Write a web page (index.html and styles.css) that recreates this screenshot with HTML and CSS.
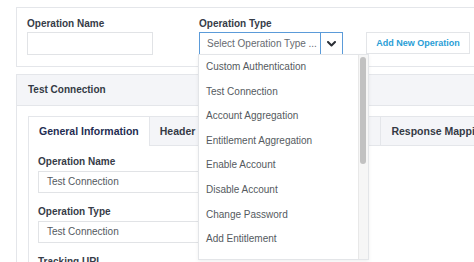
FILE: index.html
```html
<!DOCTYPE html>
<html>
<head>
<meta charset="utf-8">
<link rel="stylesheet" href="styles.css">
</head>
<body>
<div class="page">
  <section class="ops-bar">
    <div class="field f-name">
      <label class="lbl">Operation Name</label>
      <div class="input"></div>
    </div>
    <div class="field f-type">
      <label class="lbl">Operation Type</label>
      <div class="select">
        <span class="select-text">Select Operation Type ...</span>
        <span class="select-btn">
          <svg width="9" height="6" viewBox="0 0 9 6"><path d="M1 1 L4.5 4.5 L8 1" fill="none" stroke="#2b2f36" stroke-width="2" stroke-linecap="round" stroke-linejoin="round"/></svg>
        </span>
        <div class="dropdown">
          <ul class="options">
            <li>Custom Authentication</li>
            <li>Test Connection</li>
            <li>Account Aggregation</li>
            <li>Entitlement Aggregation</li>
            <li>Enable Account</li>
            <li>Disable Account</li>
            <li>Change Password</li>
            <li>Add Entitlement</li>
          </ul>
          <div class="scroll"><div class="thumb"></div></div>
        </div>
      </div>
    </div>
    <button class="add-btn">Add New Operation</button>
  </section>

  <section class="op-panel">
    <header class="op-head">Test Connection</header>
    <div class="op-body">
      <div class="tabs-card">
        <nav class="tabs">
          <div class="tab active">General Information</div>
          <div class="tab">Header</div>
          <div class="tab tab-filler"></div>
          <div class="tab">Response Mapping</div>
        </nav>
        <div class="tab-content">
          <div class="fgroup">
            <div class="lbl lbl-in">Operation Name</div>
            <div class="input filled">Test Connection</div>
          </div>
          <div class="fgroup">
            <div class="lbl lbl-in">Operation Type</div>
            <div class="input filled">Test Connection</div>
          </div>
          <div class="fgroup">
            <div class="lbl lbl-in">Tracking URL</div>
            <div class="input filled"></div>
          </div>
        </div>
      </div>
    </div>
  </section>
</div>
</body>
</html>
```

FILE: styles.css
```css
html, body {
  margin: 0;
  padding: 0;
}
body {
  width: 474px;
  height: 262px;
  overflow: hidden;
  background: #ffffff;
  font-family: "Liberation Sans", Arial, sans-serif;
}
.page {
  padding: 7px 0 0 16px;
  width: 540px;
}

/* top bar */
.ops-bar {
  box-sizing: border-box;
  height: 60px;
  border: 1px solid #e4e6ea;
  border-right: 0;
  display: flex;
  align-items: flex-start;
  padding: 10px 0 0 10px;
}
.lbl {
  display: block;
  font-size: 10px;
  font-weight: bold;
  line-height: 12px;
  color: #363c48;
  margin-bottom: 2px;
}
.input {
  box-sizing: border-box;
  border: 1px solid #e1e3e6;
  background: #fff;
}
.f-name .input {
  width: 126px;
  height: 23px;
}
.f-name {
  margin-right: 46px;
}
.select {
  position: relative;
  box-sizing: border-box;
  width: 144px;
  height: 23px;
  border: 1px solid #5b9bd9;
  display: flex;
}
.select-text {
  flex: 1;
  padding-left: 7px;
  font-size: 10px;
  line-height: 21px;
  color: #666a70;
  white-space: nowrap;
}
.select-btn {
  box-sizing: border-box;
  width: 22px;
  border-left: 1px solid #5b9bd9;
  display: flex;
  align-items: center;
  justify-content: center;
}
.add-btn {
  margin: 14px 0 0 23px;
  box-sizing: border-box;
  width: 104px;
  height: 22px;
  padding: 0;
  border: 1px solid #e3e5e8;
  background: #fff;
  font-family: "Liberation Sans", Arial, sans-serif;
  font-size: 9px;
  font-weight: bold;
  color: #2a9ed6;
  line-height: 18px;
  text-align: center;
}

/* dropdown */
.dropdown {
  position: absolute;
  left: -2px;
  top: 21px;
  z-index: 10;
  box-sizing: border-box;
  width: 171px;
  height: 206px;
  border: 1px solid #e3e5e8;
  background: #fff;
  box-shadow: 0 2px 4px rgba(0, 0, 0, 0.06);
  display: flex;
}
.options {
  list-style: none;
  margin: 0;
  padding: 0;
  flex: 1;
}
.options li {
  height: 24.6px;
  line-height: 24.6px;
  padding-left: 7px;
  font-size: 10px;
  color: #555a60;
  white-space: nowrap;
}
.scroll {
  box-sizing: border-box;
  width: 10px;
  background: #f6f6f6;
  border-left: 1px solid #e8e8e8;
  padding: 2px 0 0 1px;
}
.thumb {
  width: 6px;
  height: 107px;
  border-radius: 3px;
  background: #c1c1c1;
}

/* operation panel */
.op-panel {
  margin-top: 7px;
  border: 1px solid #e4e6ea;
  border-right: 0;
  border-bottom: 0;
}
.op-head {
  height: 30px;
  background: #f4f5f8;
  border-bottom: 1px solid #e4e6ea;
  padding-left: 11px;
  font-size: 10px;
  font-weight: bold;
  line-height: 30px;
  color: #333a45;
}
.op-body {
  padding: 10px 0 0 11px;
}
.tabs-card {
  border: 1px solid #e4e6ea;
  border-right: 0;
  border-bottom: 0;
}
.tabs {
  display: flex;
  height: 29px;
}
.tab {
  box-sizing: border-box;
  height: 29px;
  padding: 0 10px;
  background: #f4f5f8;
  border-left: 1px solid #e4e6ea;
  border-bottom: 1px solid #e4e6ea;
  font-size: 10.5px;
  font-weight: bold;
  line-height: 28px;
  color: #343a45;
  white-space: nowrap;
}
.tab.active {
  background: #fff;
  border-left: 0;
  border-bottom-color: #fff;
  color: #1f2d52;
}
.tab-filler {
  width: 175px;
}
.tab-content {
  padding: 10px 0 0 9px;
}
.fgroup {
  margin-bottom: 13px;
}
.lbl-in {
  margin-bottom: 3px;
}
.input.filled {
  width: 300px;
  height: 22px;
  padding-left: 8px;
  font-size: 10px;
  line-height: 20px;
  color: #555a60;
}
```
